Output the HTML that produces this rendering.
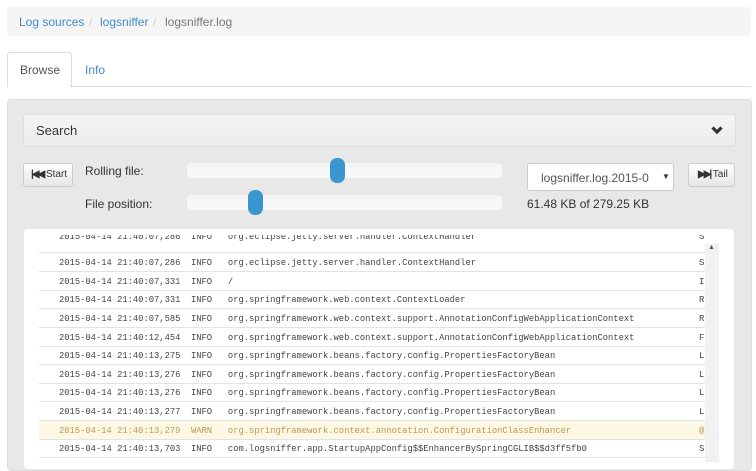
<!DOCTYPE html>
<html><head><style>
body{margin:0;width:756px;height:462px;overflow:hidden;background:#fff;font-family:"Liberation Sans",sans-serif;font-size:12px;color:#333;position:relative}
.a{position:absolute}
.bc{left:7px;top:7px;width:744px;height:29px;background:#f5f5f5;border-radius:3px}
.bc span{position:absolute;top:8px;font-size:12px}
.tab{left:7px;top:52px;width:63px;height:34px;border:1px solid #ddd;border-bottom:none;border-radius:3px 3px 0 0;background:#fff}
.tabline{left:70px;top:86px;width:681px;height:1px;background:#ddd}
.panel{left:7px;top:99px;width:743px;height:370px;background:#e8e8e8;border:1px solid #ddd;border-radius:4px}
.search{left:23px;top:114px;width:711px;height:31px;background:linear-gradient(#f5f5f5,#ececec);border:1px solid #ddd;border-radius:3px}
.btn{background:linear-gradient(#fff,#e6e6e6);border:1px solid #ccc;border-radius:3px;font-size:10px;color:#333}
.track{height:15px;border-radius:4px;background:linear-gradient(#f5f5f5,#f9f9f9)}
.knob{width:15px;height:25px;border-radius:7px;background:#3a96d0}
.log{left:24px;top:229px;width:710px;height:240px;background:#fff;border-radius:4px}
.row{position:absolute;left:39px;width:666px;height:18px;border-bottom:1px solid #e3e3e3;font-family:"Liberation Mono",monospace;font-size:8.8px;color:#444;overflow:hidden}
.row span{position:absolute;top:5px;white-space:pre}
.w{background:#fcf8e3;color:#c09853}
</style></head><body>
<div class="a bc"><span style="left:12px;color:#428bca">Log sources</span><span style="left:82px;color:#ccc">/</span><span style="left:93px;color:#428bca">logsniffer</span><span style="left:146px;color:#ccc">/</span><span style="left:158px;color:#777">logsniffer.log</span></div>
<div class="a tab"></div><div class="a" style="left:20px;top:63px;font-size:12px;color:#555">Browse</div>
<div class="a" style="left:85px;top:63px;font-size:12px;color:#428bca">Info</div>
<div class="a tabline"></div>
<div class="a panel"></div>
<div class="a search"><span class="a" style="left:12px;top:8px;font-size:13px">Search</span>
<svg class="a" style="left:687px;top:11px" width="12" height="9" viewBox="0 0 12 9"><path d="M1.5 1.5L6 6L10.5 1.5" stroke="#333" stroke-width="3.2" fill="none"/></svg></div>
<div class="a btn" style="left:23px;top:163px;width:48px;height:22px"><span class="a" style="left:7px;top:5px"><b style="letter-spacing:-2px">|◀◀</b> Start</span></div>
<div class="a" style="left:85px;top:164px;font-size:12px">Rolling file:</div>
<div class="a" style="left:85px;top:197px;font-size:12px">File position:</div>
<div class="a track" style="left:187px;top:163px;width:315px"></div>
<div class="a track" style="left:187px;top:195px;width:315px"></div>
<div class="a knob" style="left:330px;top:158px"></div>
<div class="a knob" style="left:248px;top:190px"></div>
<div class="a" style="left:527px;top:163px;width:145px;height:26px;background:#fff;border:1px solid #ccc;border-radius:3px"><span class="a" style="left:13px;top:7px;font-size:12px;color:#555">logsniffer.log.2015-0</span><span class="a" style="left:134px;top:8px;font-size:8px">▼</span></div>
<div class="a" style="left:527px;top:197px;font-size:12px">61.48 KB of 279.25 KB</div>
<div class="a btn" style="left:688px;top:163px;width:45px;height:22px"><span class="a" style="left:9px;top:5px"><b style="letter-spacing:-2px">▶▶|</b> Tail</span></div>
<div class="a log"></div>
<div class="a" style="left:705px;top:244px;width:14px;height:218px;background:#f1f1f1"><span class="a" style="left:3px;top:0px;font-size:7px;color:#555">▲</span></div>
<div class="row" style="top:235px;height:17px"><span style="left:20px;top:-3px">2015-04-14 21:40:07,286  INFO   org.eclipse.jetty.server.handler.ContextHandler</span><span style="left:660px;top:-3px">S</span></div>
<div class="row" style="top:253px"><span style="left:20px">2015-04-14 21:40:07,286  INFO   org.eclipse.jetty.server.handler.ContextHandler</span><span style="left:660px">S</span></div>
<div class="row" style="top:272px"><span style="left:20px">2015-04-14 21:40:07,331  INFO   /</span><span style="left:660px">I</span></div>
<div class="row" style="top:290px"><span style="left:20px">2015-04-14 21:40:07,331  INFO   org.springframework.web.context.ContextLoader</span><span style="left:660px">R</span></div>
<div class="row" style="top:309px"><span style="left:20px">2015-04-14 21:40:07,585  INFO   org.springframework.web.context.support.AnnotationConfigWebApplicationContext</span><span style="left:660px">R</span></div>
<div class="row" style="top:328px"><span style="left:20px">2015-04-14 21:40:12,454  INFO   org.springframework.web.context.support.AnnotationConfigWebApplicationContext</span><span style="left:660px">F</span></div>
<div class="row" style="top:346px"><span style="left:20px">2015-04-14 21:40:13,275  INFO   org.springframework.beans.factory.config.PropertiesFactoryBean</span><span style="left:660px">L</span></div>
<div class="row" style="top:365px"><span style="left:20px">2015-04-14 21:40:13,276  INFO   org.springframework.beans.factory.config.PropertiesFactoryBean</span><span style="left:660px">L</span></div>
<div class="row" style="top:383px"><span style="left:20px">2015-04-14 21:40:13,276  INFO   org.springframework.beans.factory.config.PropertiesFactoryBean</span><span style="left:660px">L</span></div>
<div class="row" style="top:402px"><span style="left:20px">2015-04-14 21:40:13,277  INFO   org.springframework.beans.factory.config.PropertiesFactoryBean</span><span style="left:660px">L</span></div>
<div class="row w" style="top:421px"><span style="left:20px">2015-04-14 21:40:13,279  WARN   org.springframework.context.annotation.ConfigurationClassEnhancer</span><span style="left:660px">@</span></div>
<div class="row" style="top:439px"><span style="left:20px">2015-04-14 21:40:13,703  INFO   com.logsniffer.app.StartupAppConfig$$EnhancerBySpringCGLIB$$d3ff5fb0</span><span style="left:660px">S</span></div>
</body></html>
